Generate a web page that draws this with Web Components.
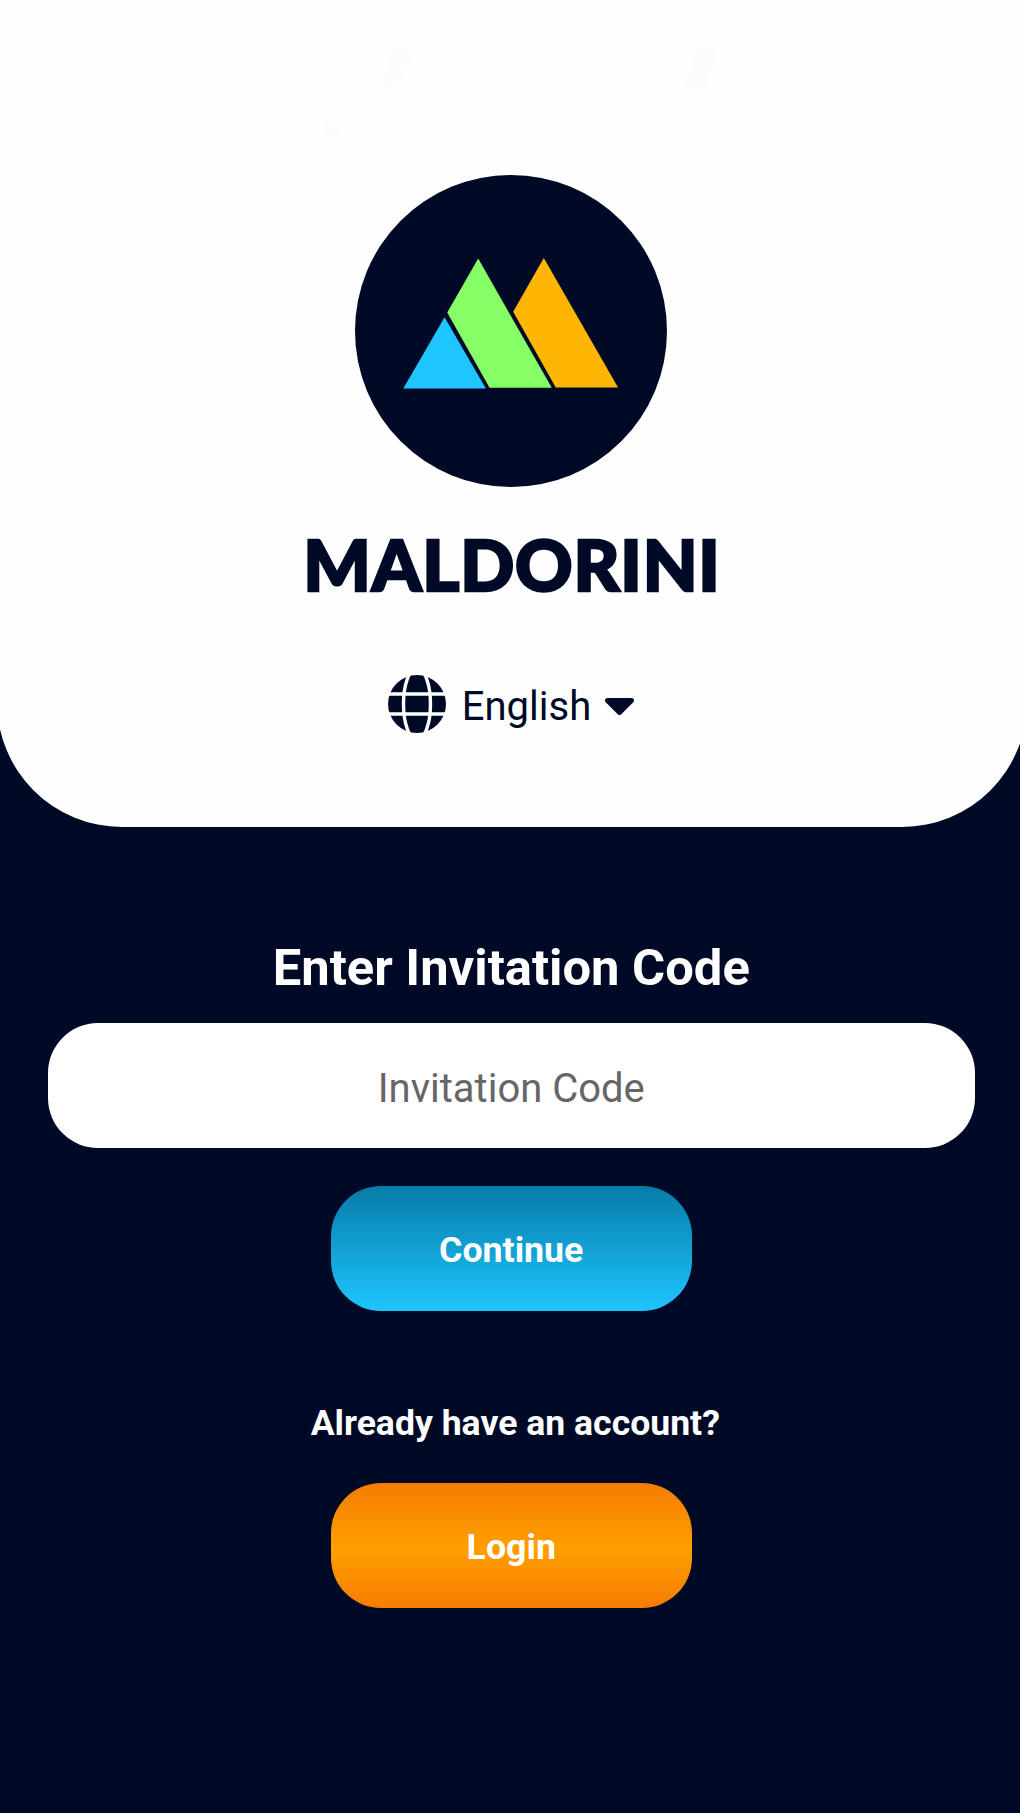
<!DOCTYPE html>
<html lang="en">
<head>
<meta charset="utf-8">
<title>Maldorini</title>
<style>
  html, body { margin: 0; background: #000a26; }
  body { font-family: Roboto, "Liberation Sans", sans-serif; }
</style>
</head>
<body>
<invite-screen>
  <brand-panel name="MALDORINI">
    <lang-select>English</lang-select>
  </brand-panel>
  <code-form>
    <span slot="title">Enter Invitation Code</span>
    <span slot="placeholder">Invitation Code</span>
    <span slot="hint">Already have an account?</span>
  </code-form>
</invite-screen>

<script>
// Page shell
class InviteScreen extends HTMLElement {
    constructor() {
        super();
        const shadow = this.attachShadow({ mode: 'open' });
        shadow.innerHTML = `
            <style>
                :host {
                    display: block;
                    width: 100%;
                    min-height: 1813px;
                    background: #000a26;
                    overflow: hidden;
                }
            </style>
            <slot></slot>
        `;
    }
}

// White top part with logo, name and language picker.
// Slightly wider than the page so its round corners get cut by the screen edge
class BrandPanel extends HTMLElement {
    constructor() {
        super();
        const shadow = this.attachShadow({ mode: 'open' });
        const name = this.getAttribute('name') || '';
        shadow.innerHTML = `
            <style>
                :host {
                    display: block;
                    position: relative;
                    height: 827px;
                    box-sizing: border-box;
                    margin: 0 -7px 0 -3px;
                    padding: 175px 2px 0 0;
                    background: #fefefe;
                    border-radius: 0 0 125px 125px;
                    overflow: hidden;
                }
                .inner {
                    display: flex;
                    flex-direction: column;
                    align-items: center;
                }
                .logo { display: block; width: 312px; height: 312px; }
                .name {
                    margin: 40px 0 0 2px;
                    height: 74px;
                    line-height: 74px;
                    font-family: Lato, "Liberation Sans", sans-serif;
                    font-weight: 900;
                    font-size: 71px;
                    letter-spacing: 0.8px;
                    color: #000a26;
                    -webkit-text-stroke: 2.5px #000a26;
                }
                .smudges {
                    position: absolute;
                    top: 0;
                    left: 3px;
                    width: 1020px;
                    height: 200px;
                    pointer-events: none;
                }
                ::slotted(lang-select) { margin-top: 70px; }
            </style>
            <svg class="smudges" viewBox="0 0 1020 200" aria-hidden="true">
                <defs><filter id="soft"><feGaussianBlur stdDeviation="3"></feGaussianBlur></filter></defs>
                <g fill="#fcfcfc" filter="url(#soft)">
                    <polygon points="394,46 418,46 396,88 382,88"></polygon>
                    <polygon points="699,46 720,46 703,92 683,92"></polygon>
                    <polygon points="322,120 332,120 342,140 330,140"></polygon>
                </g>
            </svg>
            <div class="inner">
                <svg class="logo" viewBox="45 45 937 937" role="img" aria-label="Logo">
                    <circle cx="513.5" cy="513.5" r="468.5" fill="#000a26"></circle>
                    <polygon fill="#1fc5ff" points="190,686 438,686 314,472"></polygon>
                    <polygon fill="#86ff66" points="322,458 415,296 636,684 449,684"></polygon>
                    <polygon fill="#ffb504" points="520,456 612,294 835,683 648,683"></polygon>
                </svg>
                <div class="name">${name}</div>
                <slot></slot>
            </div>
        `;
    }
}

// Globe + label + caret
class LangSelect extends HTMLElement {
    constructor() {
        super();
        const shadow = this.attachShadow({ mode: 'open' });
        shadow.innerHTML = `
            <style>
                :host {
                    display: flex;
                    align-items: center;
                    font-family: Roboto, "Liberation Sans", sans-serif;
                    font-size: 40px;
                    line-height: 60px;
                    color: #000a26;
                    cursor: pointer;
                }
                .globe { display: block; width: 58px; height: 58px; margin-right: 16px; }
                .label { margin-top: 6px; }
                .caret { display: block; width: 29px; height: 17px; margin-left: 14px; margin-top: 4px; }
            </style>
            <svg class="globe" viewBox="0 0 58 58" aria-hidden="true">
                <circle cx="29" cy="29" r="29" fill="#000a26"></circle>
                <g fill="none" stroke="#fefefe" stroke-width="3.4">
                    <ellipse cx="29" cy="29" rx="13.5" ry="36"></ellipse>
                    <path d="M0 19H58M0 39H58"></path>
                </g>
            </svg>
            <span class="label"><slot></slot></span>
            <svg class="caret" viewBox="0 0 29 17" aria-hidden="true">
                <path d="M2.5 2.5H26.5L14.5 14.5Z" fill="#000a26" stroke="#000a26" stroke-width="5" stroke-linejoin="round"></path>
            </svg>
        `;
    }
}

// Pill button with a gradient passed through --fill
class GradButton extends HTMLElement {
    constructor() {
        super();
        const shadow = this.attachShadow({ mode: 'open' });
        shadow.innerHTML = `
            <style>
                :host { display: block; }
                button {
                    display: block;
                    width: 361px;
                    height: 125px;
                    padding: 2px 0 0;
                    border: 0;
                    border-radius: 50px;
                    background: var(--fill);
                    color: #fff;
                    font-family: Roboto, "Liberation Sans", sans-serif;
                    font-weight: 700;
                    font-size: 35.7px;
                    cursor: pointer;
                }
            </style>
            <button type="button"><slot></slot></button>
        `;
    }
}

// Invitation code form
class CodeForm extends HTMLElement {
    constructor() {
        super();
        const shadow = this.attachShadow({ mode: 'open' });
        shadow.innerHTML = `
            <style>
                :host {
                    display: flex;
                    flex-direction: column;
                    align-items: center;
                    padding: 111px 45px 0 47.5px;
                    color: #fff;
                    font-family: Roboto, "Liberation Sans", sans-serif;
                }
                .title { font-weight: 700; font-size: 50.7px; line-height: 60px; margin-bottom: 25px; }
                .field {
                    display: grid;
                    width: 100%;
                    height: 125px;
                    background: #fff;
                    border-radius: 50px;
                    margin-bottom: 38px;
                }
                .field > * { grid-area: 1 / 1; }
                input {
                    width: 100%;
                    box-sizing: border-box;
                    border: 0;
                    outline: 0;
                    background: transparent;
                    text-align: center;
                    font: 40px Roboto, "Liberation Sans", sans-serif;
                    color: #222;
                }
                .ph {
                    place-self: center;
                    margin-top: 6px;
                    font-size: 40px;
                    color: #666;
                    pointer-events: none;
                }
                .ph[hidden] { display: none; }
                .hint { font-weight: 700; font-size: 35.6px; line-height: 40px; margin: 92px 0 40px; padding-left: 8px; }
                .continue { --fill: linear-gradient(180deg, #067ca8 0%, #1fc5ff 100%); }
                .login { --fill: linear-gradient(180deg, #f57c00 0%, #ff9f00 52%, #f57c00 100%); }
            </style>
            <div class="title"><slot name="title"></slot></div>
            <div class="field">
                <input type="text" aria-label="Invitation Code">
                <span class="ph"><slot name="placeholder"></slot></span>
            </div>
            <grad-button class="continue">Continue</grad-button>
            <div class="hint"><slot name="hint"></slot></div>
            <grad-button class="login">Login</grad-button>
        `;
        const input = shadow.querySelector('input');
        const ph = shadow.querySelector('.ph');
        input.addEventListener('input', () => {
            ph.hidden = input.value.length > 0;
        });
    }
}

customElements.define('invite-screen', InviteScreen);
customElements.define('brand-panel', BrandPanel);
customElements.define('lang-select', LangSelect);
customElements.define('grad-button', GradButton);
customElements.define('code-form', CodeForm);
</script>
</body>
</html>
